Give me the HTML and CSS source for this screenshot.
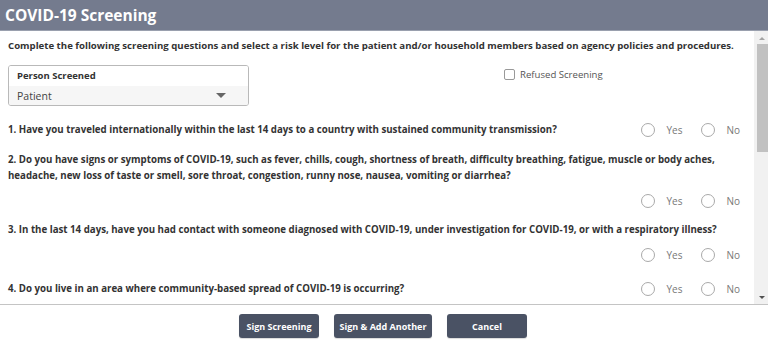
FILE: index.html
```html
<!DOCTYPE html>
<html>
<head>
<meta charset="utf-8">
<link rel="stylesheet" href="styles.css">
</head>
<body>
<div class="dialog">
  <div class="header">COVID-19 Screening</div>
  <div class="body">
    <div class="content">
      <div class="intro">Complete the following screening questions and select a risk level for the patient and/or household members based on agency policies and procedures.</div>
      <div class="top-row">
        <div class="person-box">
          <div class="person-label">Person Screened</div>
          <div class="person-value"><span>Patient</span><span class="caret"></span></div>
        </div>
        <label class="refused"><span class="checkbox"></span><span>Refused Screening</span></label>
      </div>

      <div class="q q1 inline">
        <div class="q-text">1. Have you traveled internationally within the last 14 days to a country with sustained community transmission?</div>
        <div class="opts"><span class="radio"></span><span class="opt-label">Yes</span><span class="radio"></span><span class="opt-label">No</span></div>
      </div>

      <div class="q q2">
        <div class="q-text">2. Do you have signs or symptoms of COVID-19, such as fever, chills, cough, shortness of breath, difficulty breathing, fatigue, muscle or body aches, headache, new loss of taste or smell, sore throat, congestion, runny nose, nausea, vomiting or diarrhea?</div>
        <div class="opts-row"><div class="opts"><span class="radio"></span><span class="opt-label">Yes</span><span class="radio"></span><span class="opt-label">No</span></div></div>
      </div>

      <div class="q q3">
        <div class="q-text">3. In the last 14 days, have you had contact with someone diagnosed with COVID-19, under investigation for COVID-19, or with a respiratory illness?</div>
        <div class="opts-row"><div class="opts"><span class="radio"></span><span class="opt-label">Yes</span><span class="radio"></span><span class="opt-label">No</span></div></div>
      </div>

      <div class="q q4 inline">
        <div class="q-text">4. Do you live in an area where community-based spread of COVID-19 is occurring?</div>
        <div class="opts"><span class="radio"></span><span class="opt-label">Yes</span><span class="radio"></span><span class="opt-label">No</span></div>
      </div>
    </div>
    <div class="scrollbar">
      <div class="arrow up"></div>
      <div class="thumb"></div>
      <div class="spacer"></div>
      <div class="arrow down"></div>
    </div>
  </div>
  <div class="footer">
    <button class="btn w80">Sign Screening</button>
    <button class="btn w98">Sign &amp; Add Another</button>
    <button class="btn w80">Cancel</button>
  </div>
</div>
</body>
</html>
```
FILE: styles.css
```css
* { box-sizing: border-box; }
html, body { margin: 0; padding: 0; background: #fff; }
body { font-family: "Open Sans", "Liberation Sans", sans-serif; color: #333; width: 768px; height: 341px; overflow: hidden; }

.dialog { display: flex; flex-direction: column; height: 341px; }

.header {
  height: 31px;
  background: #747b8e;
  color: #fff;
  font-weight: 700;
  font-size: 15.5px;
  line-height: 31px;
  padding-left: 5px;
  border-bottom: 1px solid #9aa0ae;
}

.body { display: flex; height: 274px; border-bottom: 1px solid #c4c4c4; }
.content { flex: 1; padding: 8px 14px 0 8px; overflow: hidden; }

.intro { font-size: 9.65px; font-weight: 700; line-height: 14px; color: #333; white-space: nowrap; }

.top-row { display: flex; align-items: flex-start; margin-top: 12px; }
.person-box {
  width: 241px;
  height: 41px;
  border: 1px solid #b9b9b9;
  border-radius: 3px;
  overflow: hidden;
  display: flex;
  flex-direction: column;
}
.person-label { height: 20px; line-height: 20px; padding-left: 8px; font-size: 9.5px; font-weight: 700; color: #333; background: #fff; }
.person-value { flex: 1; background: #f6f6f6; display: flex; align-items: center; justify-content: space-between; padding: 0 22px 0 8px; font-size: 10.5px; color: #444; }
.caret { width: 0; height: 0; border-left: 5px solid transparent; border-right: 5px solid transparent; border-top: 5px solid #666; }

.refused { display: flex; align-items: center; margin-left: 255px; margin-top: 3px; font-size: 9.6px; color: #555; }
.checkbox { width: 11px; height: 11px; border: 1px solid #999; border-radius: 2px; background: #fff; margin-right: 5px; }

.q { font-size: 9.7px; font-weight: 700; color: #333; }
.q-text { line-height: 16px; }
.inline { display: flex; align-items: center; justify-content: space-between; height: 20px; }
.q1 { margin-top: 14px; }
.q2 { margin-top: 12px; }
.q3 { margin-top: 11px; }
.q4 { margin-top: 14px; }
.q2 .opts-row { margin-top: 7px; }
.q3 .opts-row { margin-top: 7px; }

.opts-row { display: flex; justify-content: flex-end; height: 20px; align-items: center; }
.opts { display: flex; align-items: center; font-weight: 400; font-size: 10px; color: #777; }
.radio { width: 14px; height: 14px; border: 1px solid #a9a9a9; border-radius: 50%; background: #fff; }
.opt-label { margin-left: 11px; margin-right: 19px; }
.opt-label:last-child { margin-right: 0; }

.scrollbar { width: 14px; background: #f1f1f1; display: flex; flex-direction: column; align-items: center; padding: 0 0 0 2px; }
.arrow { width: 0; height: 0; border-left: 3px solid transparent; border-right: 3px solid transparent; }
.arrow.up { border-bottom: 3px solid #a3a3a3; margin-top: 6px; }
.arrow.down { border-top: 3px solid #505050; margin-bottom: 5px; }
.thumb { width: 11px; height: 108px; background: #c1c1c1; margin-top: 4px; }
.spacer { flex: 1; }

.footer { flex: 1; display: flex; justify-content: center; align-items: flex-start; padding-top: 9px; padding-right: 2px; gap: 15px; }
.btn {
  height: 24px;
  border: none;
  border-radius: 3px;
  background: #4a5264;
  color: #fff;
  font-family: "Open Sans", "Liberation Sans", sans-serif;
  font-weight: 700;
  font-size: 9px;
  padding: 0;
  box-shadow: 0 1px 1px rgba(0,0,0,0.15);
}
.w80 { width: 80px; }
.w98 { width: 98px; }
```
